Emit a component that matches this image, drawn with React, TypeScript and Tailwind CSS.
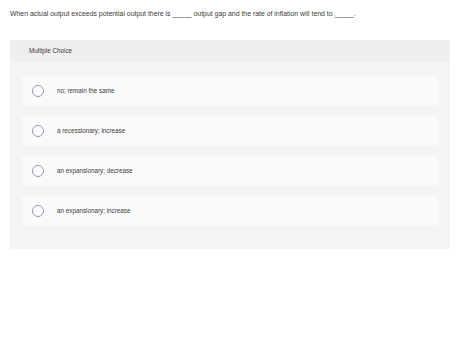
const options = [
  'no; remain the same',
  'a recessionary; increase',
  'an expansionary; decrease',
  'an expansionary; increase',
]

export default function App() {
  return (
    <div className="w-[474px] h-[341px] bg-white text-[#3a3a3a] font-['Liberation_Sans',Arial,sans-serif]">
      <div className="pt-[9px] pl-[10px] text-[6.9px] leading-[9px]">
        When actual output exceeds potential output there is _____ output gap and the rate of inflation will tend to _____.
      </div>

      <div className="mt-[22px] ml-[10px] w-[440px] bg-[#f4f4f4] pb-[23px]">
        <div className="h-[22px] bg-[#efefef] pl-[19px] flex items-center text-[6.3px]">
          Multiple Choice
        </div>
        <div className="mt-[14px] px-[12px] flex flex-col gap-[10px]">
          {options.map((o) => (
            <div key={o} className="h-[30px] bg-[#fafafa] rounded-[2px] flex items-center">
              <span className="ml-[10px] w-[12px] h-[12px] rounded-full border border-[#8d9cb0] bg-white" />
              <span className="ml-[13px] text-[6.3px]">{o}</span>
            </div>
          ))}
        </div>
      </div>
    </div>
  )
}
